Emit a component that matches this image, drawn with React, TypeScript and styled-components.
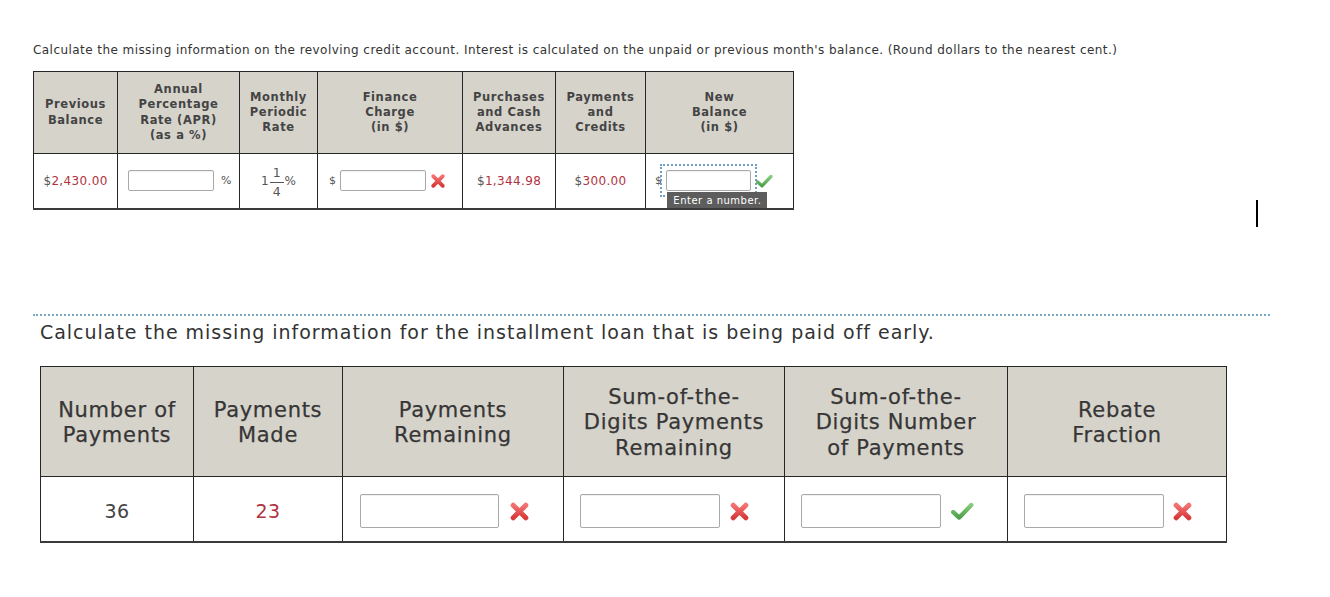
import React from 'react';
import styled, { createGlobalStyle } from 'styled-components';

const Global = createGlobalStyle`
  html, body { margin: 0; padding: 0; background: #fff; }
  body { font-family: "DejaVu Sans", Verdana, sans-serif; color: #333; }
  * { box-sizing: border-box; }
`;

const Page = styled.div`
  position: relative;
  width: 1330px;
  height: 597px;
  padding: 43px 0 0 33px;
  overflow: hidden;
`;

const Instruction = styled.p`
  margin: 0;
  font-size: 12px;
  line-height: 15px;
  letter-spacing: 0.44px;
  color: #333;
  white-space: nowrap;
`;

const Grid = styled.table<{ $top: number; $left?: number }>`
  border-collapse: collapse;
  table-layout: fixed;
  margin-top: ${(p) => p.$top}px;
  margin-left: ${(p) => p.$left ?? 0}px;
  border: 1px solid #262626;
  border-bottom-width: 2px;
  border-bottom-color: #3a3a3a;
`;

const Col = styled.col<{ $w: number }>`
  width: ${(p) => p.$w}px;
`;

const HeadRow = styled.tr<{ $h: number }>`
  height: ${(p) => p.$h}px;
`;

const BodyRow = styled.tr<{ $h: number }>`
  height: ${(p) => p.$h}px;
`;

const Head = styled.th<{ $large?: boolean }>`
  background: #d6d3cb;
  border: 1px solid #262626;
  padding: ${(p) => (p.$large ? '4px 2px 0' : '0 2px')};
  text-align: center;
  vertical-align: middle;
  color: ${(p) => (p.$large ? '#363636' : '#444')};
  font-weight: ${(p) => (p.$large ? 'normal' : 'bold')};
  font-size: ${(p) => (p.$large ? '21px' : '11.5px')};
  line-height: ${(p) => (p.$large ? '25.5px' : '15.3px')};
  letter-spacing: ${(p) => (p.$large ? '0.7px' : '0.6px')};
  -webkit-text-stroke: ${(p) => (p.$large ? '0.25px #363636' : '0')};
`;

const Cell = styled.td<{ $large?: boolean }>`
  border: 1px solid #262626;
  padding: ${(p) => (p.$large ? '5px 0 0' : '0')};
  text-align: center;
  vertical-align: middle;
  color: #444;
  font-size: ${(p) => (p.$large ? '19px' : '12px')};
  letter-spacing: ${(p) => (p.$large ? '0.5px' : '0.35px')};
`;

const Money = styled.span`
  color: #555;
`;

const Red = styled.span`
  color: #b1333e;
`;

const InputLine = styled.div<{ $pad: number; $gap: number }>`
  display: flex;
  align-items: center;
  gap: ${(p) => p.$gap}px;
  padding-left: ${(p) => p.$pad}px;
`;

const Field = styled.div<{ $w: number; $h: number }>`
  width: ${(p) => p.$w}px;
  height: ${(p) => p.$h}px;
  border: 1px solid #a9a9a9;
  border-radius: 2px;
  background: #fff;
  box-shadow: inset 0 1px 1px rgba(0, 0, 0, 0.06);
`;

const Unit = styled.span`
  font-size: 11px;
  color: #555;
`;

const FocusWrap = styled.div`
  position: relative;
  outline: 2px dotted #6f9fc2;
  outline-offset: 4px;
`;

const Tooltip = styled.div`
  position: absolute;
  left: 1px;
  top: 22px;
  background: #5d5d5d;
  color: #fff;
  font-size: 10px;
  line-height: 15px;
  padding: 1px 6px 0 6px;
  white-space: nowrap;
  letter-spacing: 0.5px;
  z-index: 2;
`;

const Mixed = styled.span`
  display: inline-flex;
  align-items: center;
  gap: 1px;
  color: #555;
  font-size: 12px;
  letter-spacing: 0;
`;

const Frac = styled.span`
  display: inline-flex;
  flex-direction: column;
  align-items: center;
  font-size: 12.5px;
  line-height: 14px;
  margin-top: 3px;
`;

const FracTop = styled.span`
  border-bottom: 1px solid #555;
  padding: 0 3px 2px;
  line-height: 14px;
`;

const FracBottom = styled.span`
  padding-top: 2px;
`;

const Separator = styled.div`
  margin-top: 104px;
  width: 1237px;
  border-top: 2px dotted #79a8c6;
`;

const Subtitle = styled.p`
  margin: 5px 0 0 7px;
  font-size: 19px;
  line-height: 22px;
  color: #333;
  letter-spacing: 0.97px;
  white-space: nowrap;
`;

const Caret = styled.div`
  position: absolute;
  left: 1256px;
  top: 200px;
  width: 2px;
  height: 27px;
  background: #000;
`;

const Cross = ({ size }: { size: number }) => (
  <svg width={size} height={size} viewBox="0 0 20 20">
    <defs>
      <linearGradient id="xg" x1="0" y1="0" x2="0" y2="1">
        <stop offset="0" stopColor="#f47272" />
        <stop offset="1" stopColor="#d83a3a" />
      </linearGradient>
    </defs>
    <path d="M4 4 L16 16 M16 4 L4 16" stroke="url(#xg)" strokeWidth="4.8" strokeLinecap="round" fill="none" />
  </svg>
);

const Check = ({ size }: { size: number }) => (
  <svg width={size} height={size} viewBox="0 0 22 18">
    <defs>
      <linearGradient id="cg" x1="0" y1="0" x2="0" y2="1">
        <stop offset="0" stopColor="#86cc7e" />
        <stop offset="1" stopColor="#4e9f4a" />
      </linearGradient>
    </defs>
    <path d="M3 10 L8.5 15 L19.5 3.5" stroke="url(#cg)" strokeWidth="4" strokeLinecap="round" strokeLinejoin="round" fill="none" />
  </svg>
);

export default function App() {
  return (
    <Page>
      <Global />
      <Instruction>
        Calculate the missing information on the revolving credit account. Interest is calculated on the unpaid or previous month's balance. (Round dollars to the nearest cent.)
      </Instruction>

      <Grid $top={13}>
        <colgroup>
          <Col $w={84} />
          <Col $w={122} />
          <Col $w={78} />
          <Col $w={145} />
          <Col $w={93} />
          <Col $w={90} />
          <Col $w={148} />
        </colgroup>
        <thead>
          <HeadRow $h={82}>
            <Head>Previous<br />Balance</Head>
            <Head>Annual<br />Percentage<br />Rate (APR)<br />(as a %)</Head>
            <Head>Monthly<br />Periodic<br />Rate</Head>
            <Head>Finance<br />Charge<br />(in $)</Head>
            <Head>Purchases<br />and Cash<br />Advances</Head>
            <Head>Payments<br />and<br />Credits</Head>
            <Head>New<br />Balance<br />(in $)</Head>
          </HeadRow>
        </thead>
        <tbody>
          <BodyRow $h={55}>
            <Cell><Money>$</Money><Red>2,430.00</Red></Cell>
            <Cell>
              <InputLine $pad={10} $gap={7}>
                <Field $w={86} $h={21} />
                <Unit>%</Unit>
              </InputLine>
            </Cell>
            <Cell>
              <Mixed>
                1<Frac><FracTop>1</FracTop><FracBottom>4</FracBottom></Frac>%
              </Mixed>
            </Cell>
            <Cell>
              <InputLine $pad={11} $gap={4}>
                <Unit>$</Unit>
                <Field $w={86} $h={21} />
                <Cross size={16} />
              </InputLine>
            </Cell>
            <Cell><Money>$</Money><Red>1,344.98</Red></Cell>
            <Cell><Money>$</Money><Red>300.00</Red></Cell>
            <Cell>
              <InputLine $pad={9} $gap={4}>
                <Unit>$</Unit>
                <FocusWrap>
                  <Field $w={85} $h={21} />
                  <Tooltip>Enter a number.</Tooltip>
                </FocusWrap>
                <Check size={18} />
              </InputLine>
            </Cell>
          </BodyRow>
        </tbody>
      </Grid>

      <Separator />
      <Subtitle>Calculate the missing information for the installment loan that is being paid off early.</Subtitle>

      <Grid $top={23} $left={7}>
        <colgroup>
          <Col $w={153} />
          <Col $w={149} />
          <Col $w={221} />
          <Col $w={221} />
          <Col $w={223} />
          <Col $w={219} />
        </colgroup>
        <thead>
          <HeadRow $h={110}>
            <Head $large>Number of<br />Payments</Head>
            <Head $large>Payments<br />Made</Head>
            <Head $large>Payments<br />Remaining</Head>
            <Head $large>Sum-of-the-<br />Digits Payments<br />Remaining</Head>
            <Head $large>Sum-of-the-<br />Digits Number<br />of Payments</Head>
            <Head $large>Rebate<br />Fraction</Head>
          </HeadRow>
        </thead>
        <tbody>
          <BodyRow $h={66}>
            <Cell $large>36</Cell>
            <Cell $large><Red>23</Red></Cell>
            <Cell $large>
              <InputLine $pad={17} $gap={10}>
                <Field $w={139} $h={34} />
                <Cross size={21} />
              </InputLine>
            </Cell>
            <Cell $large>
              <InputLine $pad={16} $gap={9}>
                <Field $w={140} $h={34} />
                <Cross size={21} />
              </InputLine>
            </Cell>
            <Cell $large>
              <InputLine $pad={16} $gap={9}>
                <Field $w={140} $h={34} />
                <Check size={24} />
              </InputLine>
            </Cell>
            <Cell $large>
              <InputLine $pad={16} $gap={8}>
                <Field $w={140} $h={34} />
                <Cross size={21} />
              </InputLine>
            </Cell>
          </BodyRow>
        </tbody>
      </Grid>
      <Caret />
    </Page>
  );
}
